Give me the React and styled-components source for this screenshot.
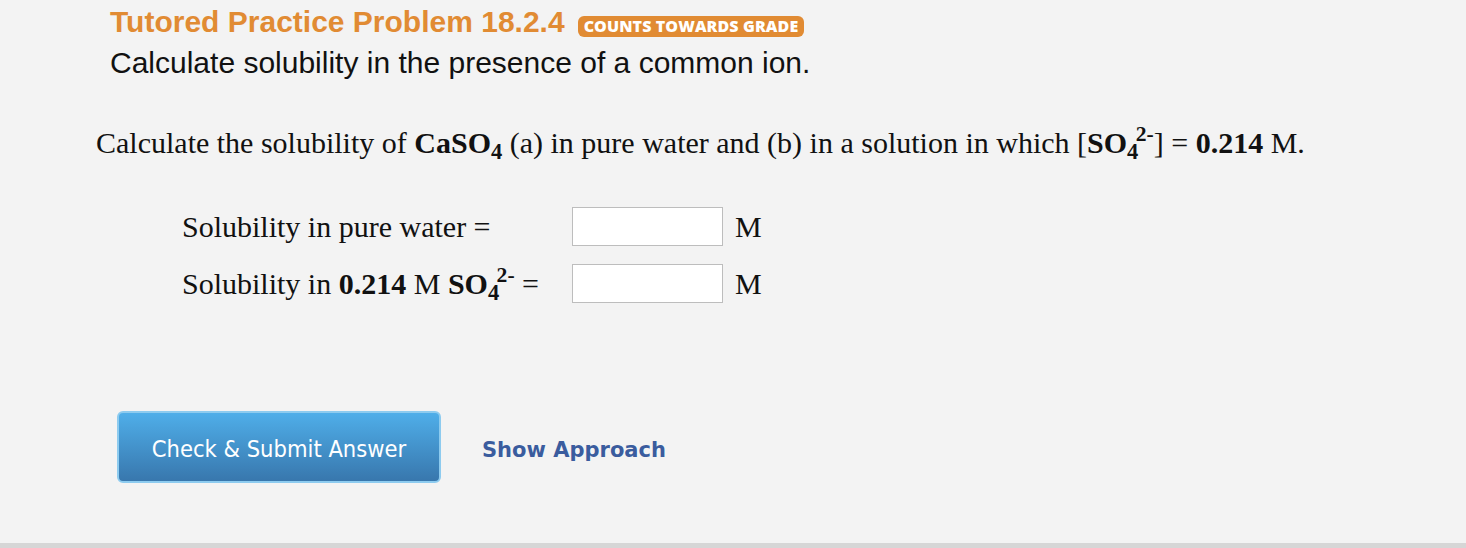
import React from 'react'
import styled, { createGlobalStyle } from 'styled-components'

const GlobalStyle = createGlobalStyle`
  html, body {
    margin: 0;
    padding: 0;
    background: #f3f3f3;
  }
`

const Page = styled.div`
  width: 1466px;
  height: 548px;
  box-sizing: border-box;
  background: #f3f3f3;
  border-bottom: 5px solid #d6d6d6;
  display: flex;
  flex-direction: column;
  overflow: hidden;
`

const Header = styled.div`
  padding: 4px 0 0 110px;
  font-family: 'Liberation Sans', Arial, sans-serif;
`

const TitleRow = styled.div`
  display: flex;
  align-items: center;
  gap: 13px;
  height: 36px;
`

const Title = styled.h1`
  margin: 0;
  font-size: 30px;
  font-weight: 700;
  color: #e18b33;
  line-height: 36px;
`

const Badge = styled.span`
  background: #e18b33;
  color: #fff;
  font-family: 'Open Sans', 'Liberation Sans', sans-serif;
  font-weight: 800;
  font-size: 16px;
  letter-spacing: 0.1px;
  padding: 2px 6px;
  border-radius: 6px;
  margin-top: 9px;
  line-height: 17px;
`

const Subtitle = styled.div`
  margin-top: 3px;
  font-size: 30px;
  color: #111;
  line-height: 40px;
`

const Question = styled.p`
  margin: 43px 0 0 96px;
  font-family: 'Liberation Serif', 'Times New Roman', serif;
  font-size: 30px;
  color: #111;
`

const Chem = styled.span`
  white-space: nowrap;
`

const Sub = styled.sub`
  font-size: 0.75em;
  font-weight: 700;
  vertical-align: -0.25em;
  line-height: 0;
`

const Sup = styled.sup`
  font-size: 0.72em;
  font-weight: 700;
  vertical-align: 0.55em;
  line-height: 0;
  margin-left: ${p => (p.$shift ? '-0.12em' : '0')};
`

const Answers = styled.div`
  margin: 47px 0 0 182px;
  display: grid;
  grid-template-columns: 390px 151px auto;
  row-gap: 18px;
  align-items: center;
  font-family: 'Liberation Serif', 'Times New Roman', serif;
  font-size: 30px;
  color: #111;
`

const Label = styled.div``

const Field = styled.input`
  width: 151px;
  height: 39px;
  box-sizing: border-box;
  border: 1px solid #bdbdbd;
  background: #fff;
  outline: none;
`

const Unit = styled.div`
  margin-left: 12px;
`

const Actions = styled.div`
  margin: 108px 0 0 117px;
  display: flex;
  align-items: center;
  gap: 41px;
`

const SubmitButton = styled.button`
  width: 324px;
  height: 72px;
  padding-top: 4px;
  border: 2px solid #8dcbef;
  border-radius: 6px;
  background: linear-gradient(#4faee9, #3877ad);
  color: #fff;
  font-family: 'DejaVu Sans Condensed', 'DejaVu Sans', Verdana, sans-serif;
  font-size: 23.5px;
  cursor: pointer;
`

const LinkButton = styled.a`
  font-family: 'DejaVu Sans', Verdana, sans-serif;
  font-weight: 700;
  font-size: 21px;
  color: #3a5c9e;
  text-decoration: none;
  cursor: pointer;
  padding-top: 6px;
`

const SO4 = ({ charge }) => (
  <Chem>
    <b>SO</b>
    <Sub>4</Sub>
    <Sup $shift>{charge}</Sup>
  </Chem>
)

const App = () => {
  return (
    <Page>
      <GlobalStyle />
      <Header>
        <TitleRow>
          <Title>Tutored Practice Problem 18.2.4</Title>
          <Badge>COUNTS TOWARDS GRADE</Badge>
        </TitleRow>
        <Subtitle>Calculate solubility in the presence of a common ion.</Subtitle>
      </Header>
      <Question>
        Calculate the solubility of <b>CaSO</b>
        <Sub>4</Sub> (a) in pure water and (b) in a solution in which [<SO4 charge="2-" />] ={' '}
        <b>0.214</b> M.
      </Question>
      <Answers>
        <Label>Solubility in pure water =</Label>
        <Field type="text" />
        <Unit>M</Unit>
        <Label>
          Solubility in <b>0.214</b> M <SO4 charge="2-" /> =
        </Label>
        <Field type="text" />
        <Unit>M</Unit>
      </Answers>
      <Actions>
        <SubmitButton>Check &amp; Submit Answer</SubmitButton>
        <LinkButton>Show Approach</LinkButton>
      </Actions>
    </Page>
  )
}

export default App
